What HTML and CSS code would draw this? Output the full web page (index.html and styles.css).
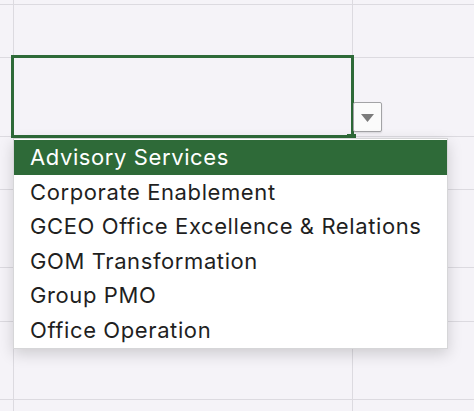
FILE: index.html
```html
<!DOCTYPE html>
<html>
<head>
<meta charset="utf-8">
<link rel="stylesheet" href="styles.css">
</head>
<body>
<div class="sheet">
  <div class="grid">
    <div class="c"></div><div class="c"></div><div class="c"></div>
    <div class="c"></div><div class="c"></div><div class="c"></div>
    <div class="c"></div><div class="c"></div><div class="c"></div>
    <div class="c"></div><div class="c"></div><div class="c"></div>
    <div class="c"></div><div class="c"></div><div class="c"></div>
    <div class="c"></div><div class="c"></div><div class="c"></div>
    <div class="c"></div><div class="c"></div><div class="c"></div>
    <div class="c"></div><div class="c"></div><div class="c"></div>
  </div>
  <div class="selection"></div>
  <div class="handle"></div>
  <div class="dd-button">
    <svg width="13" height="8" viewBox="0 0 13 8"><path d="M0 0 H13 L6.5 8 Z" fill="#7b7b7b"/></svg>
  </div>
  <ul class="list">
    <li class="item active">Advisory Services</li>
    <li class="item">Corporate Enablement</li>
    <li class="item">GCEO Office Excellence &amp; Relations</li>
    <li class="item">GOM Transformation</li>
    <li class="item">Group PMO</li>
    <li class="item">Office Operation</li>
  </ul>
</div>
</body>
</html>
```
FILE: styles.css
```css
html, body {
  margin: 0;
  padding: 0;
  width: 474px;
  height: 411px;
  overflow: hidden;
  background: #f5f3f8;
}
.sheet {
  position: relative;
  width: 474px;
  height: 411px;
}
.grid {
  display: grid;
  grid-template-columns: 13px 338px 1fr;
  grid-template-rows: 4px 52px 78px 52px 77px 53px 77px 1fr;
  gap: 1px;
  background: #dcdae0;
  width: 474px;
  height: 411px;
}
.c {
  background: #f5f3f8;
}
.selection {
  position: absolute;
  left: 11px;
  top: 55px;
  width: 337px;
  height: 77px;
  border: 3px solid #2e6a38;
}
.handle {
  position: absolute;
  left: 347px;
  top: 134px;
  width: 9px;
  height: 6px;
  background: #2e6a38;
}
.dd-button {
  position: absolute;
  left: 353px;
  top: 102px;
  width: 27px;
  height: 28px;
  border: 1px solid #a3a3a6;
  border-radius: 2px;
  background: #fbfbfb;
  display: flex;
  align-items: center;
  justify-content: center;
  box-shadow: 0 1px 2px rgba(0,0,0,0.12);
}
.dd-button svg {
  display: block;
  margin-top: 1px;
}
.list {
  position: absolute;
  left: 13px;
  top: 138px;
  width: 433px;
  height: 208px;
  margin: 0;
  padding: 1px 0 0 0;
  list-style: none;
  background: #ffffff;
  border: 1px solid #d6d6d8;
  box-shadow: 0 5px 14px rgba(0,0,0,0.16);
  font-family: Inter, "Liberation Sans", sans-serif;
  font-size: 22px;
  letter-spacing: 0.6px;
  color: #1f1f1f;
}
.item {
  height: 34.6px;
  line-height: 34.6px;
  padding-left: 16px;
  white-space: nowrap;
}
.item.active {
  background: #2e6a38;
  color: #ffffff;
}
```
